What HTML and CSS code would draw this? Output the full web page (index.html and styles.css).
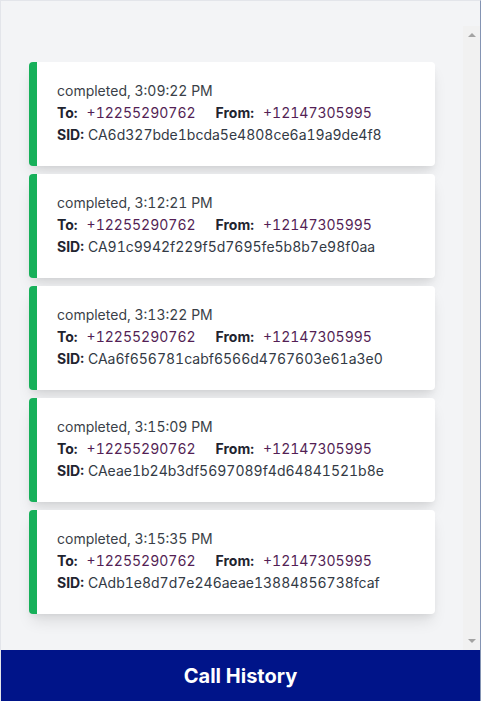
FILE: index.html
```html
<!DOCTYPE html>
<html>
<head>
<meta charset="utf-8">
<link rel="stylesheet" href="styles.css">
</head>
<body>
<div class="app">
  <div class="top"></div>
  <div class="list">
    <div class="scroller">
      <div class="card">
        <div class="line status">completed, 3:09:22 PM</div>
        <div class="line"><span class="lbl">To:</span><span class="num">+12255290762</span><span class="lbl from">From:</span><span class="num">+12147305995</span></div>
        <div class="line"><span class="lbl sid">SID:</span><span class="sidv">CA6d327bde1bcda5e4808ce6a19a9de4f8</span></div>
      </div>
      <div class="card">
        <div class="line status">completed, 3:12:21 PM</div>
        <div class="line"><span class="lbl">To:</span><span class="num">+12255290762</span><span class="lbl from">From:</span><span class="num">+12147305995</span></div>
        <div class="line"><span class="lbl sid">SID:</span><span class="sidv">CA91c9942f229f5d7695fe5b8b7e98f0aa</span></div>
      </div>
      <div class="card">
        <div class="line status">completed, 3:13:22 PM</div>
        <div class="line"><span class="lbl">To:</span><span class="num">+12255290762</span><span class="lbl from">From:</span><span class="num">+12147305995</span></div>
        <div class="line"><span class="lbl sid">SID:</span><span class="sidv">CAa6f656781cabf6566d4767603e61a3e0</span></div>
      </div>
      <div class="card">
        <div class="line status">completed, 3:15:09 PM</div>
        <div class="line"><span class="lbl">To:</span><span class="num">+12255290762</span><span class="lbl from">From:</span><span class="num">+12147305995</span></div>
        <div class="line"><span class="lbl sid">SID:</span><span class="sidv">CAeae1b24b3df5697089f4d64841521b8e</span></div>
      </div>
      <div class="card">
        <div class="line status">completed, 3:15:35 PM</div>
        <div class="line"><span class="lbl">To:</span><span class="num">+12255290762</span><span class="lbl from">From:</span><span class="num">+12147305995</span></div>
        <div class="line"><span class="lbl sid">SID:</span><span class="sidv">CAdb1e8d7d7e246aeae13884856738fcaf</span></div>
      </div>
    </div>
    <div class="sbar">
      <span class="arrow up"></span>
      <span class="arrow down"></span>
    </div>
  </div>
  <div class="footer">Call History</div>
</div>
</body>
</html>
```
FILE: styles.css
```css
html, body {
  margin: 0;
  padding: 0;
  height: 100%;
}
body {
  font-family: Inter, "Noto Sans", sans-serif;
  background: #f3f4f6;
}
.app {
  box-sizing: border-box;
  width: 481px;
  height: 701px;
  border-left: 1px solid #e3e5ea;
  border-top: 1px solid #e3e5ea;
  border-right: 1px solid #8494b3;
  background: #f3f4f6;
  display: flex;
  flex-direction: column;
}
.top {
  height: 25px;
  flex: none;
}
.list {
  height: 624px;
  flex: none;
  display: flex;
}
.scroller {
  flex: 1;
  overflow: hidden;
  box-sizing: border-box;
  padding: 36px 28px;
  display: flex;
  flex-direction: column;
  gap: 8px;
}
.sbar {
  width: 17px;
  flex: none;
  background: #f1f1f1;
  display: flex;
  flex-direction: column;
  justify-content: space-between;
  align-items: center;
  padding: 6px 0;
  box-sizing: border-box;
}
.arrow {
  width: 0;
  height: 0;
  border-left: 4px solid transparent;
  border-right: 4px solid transparent;
}
.arrow.up {
  border-bottom: 4px solid #a3a3a3;
  margin-top: 1px;
}
.arrow.down {
  border-top: 4px solid #a3a3a3;
  margin-bottom: 1px;
}
.card {
  flex: none;
  box-sizing: border-box;
  height: 104px;
  width: 406px;
  background: #fff;
  border-left: 8px solid #17b05a;
  border-radius: 4px;
  padding: 18px 20px 0 20px;
  box-shadow: 0 10px 15px -3px rgba(0,0,0,0.1), 0 4px 6px -2px rgba(0,0,0,0.06);
  font-size: 14px;
  color: #333a45;
  font-variant-numeric: tabular-nums;
}
.line {
  line-height: 22px;
  white-space: nowrap;
}
.status {
  color: #3a3f48;
}
.lbl {
  font-weight: 700;
  color: #1f2430;
  margin-right: 9px;
}
.lbl.from {
  margin-left: 20px;
}
.lbl.sid {
  margin-right: 4px;
}
.num {
  color: #531f55;
}
.sidv {
  color: #333a45;
}
.footer {
  flex: 1;
  background: #001489;
  color: #fff;
  font-weight: 700;
  font-size: 20px;
  display: flex;
  align-items: center;
  justify-content: center;
}
```
